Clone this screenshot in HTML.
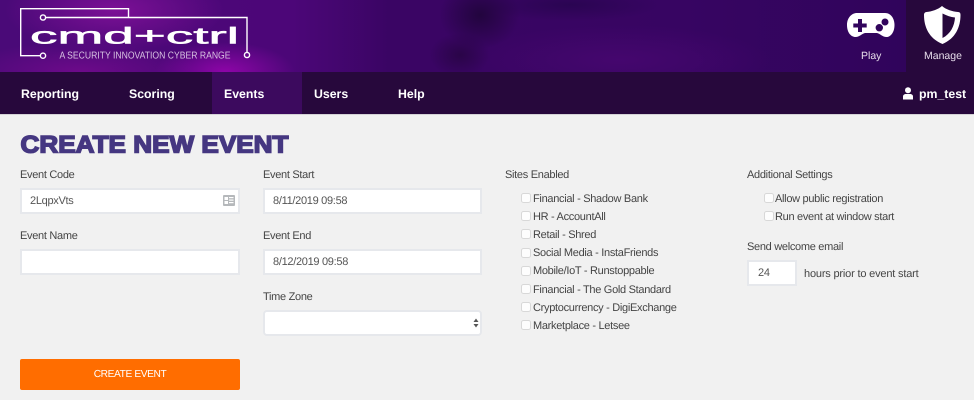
<!DOCTYPE html>
<html><head><meta charset="utf-8"><style>
*{box-sizing:border-box}
html,body{margin:0;padding:0}
body{width:974px;height:400px;overflow:hidden;background:#f1f1f1;position:relative;font-family:"Liberation Sans",sans-serif;color:#444;text-rendering:geometricPrecision}
.a{position:absolute;white-space:nowrap;line-height:14px}
.l{font-size:11px;letter-spacing:-.3px;color:#444}
.i{position:absolute;background:#fff;border:2px solid #e6e8ec;height:26px;font-size:11px;letter-spacing:-.3px;line-height:22px;padding-left:8px;color:#555}
.c{position:absolute;width:10px;height:10px;background:#fdfdfd;border:1px solid #d8d8d8;border-radius:2.5px}
.n{position:absolute;top:87px;font-size:12.3px;font-weight:bold;color:#fff;line-height:15px;white-space:nowrap}
#hd{position:absolute;left:0;top:0;width:974px;height:72px;background:
radial-gradient(ellipse 70px 30px at 225px 72px,#8e05a8 0,rgba(142,5,168,0) 100%),
radial-gradient(ellipse 110px 42px at 115px 10px,#7c1096 0,rgba(124,16,150,0) 100%),
radial-gradient(ellipse 120px 30px at 80px 72px,#6d0a8a 0,rgba(109,10,138,0) 100%),
radial-gradient(ellipse 40px 34px at 480px 15px,#22053e 0,rgba(34,5,62,0) 100%),
radial-gradient(ellipse 30px 22px at 460px 55px,#2a0548 0,rgba(42,5,72,0) 100%),
radial-gradient(ellipse 90px 16px at 570px 5px,#2a0552 0,rgba(42,5,82,0) 100%),
radial-gradient(ellipse 150px 35px at 620px 60px,#45066e 0,rgba(69,6,110,0) 100%),
linear-gradient(90deg,#4a0a78 0,#4c0678 30%,#3a0564 40%,#370562 70%,#2e0459 100%)}
</style></head><body>
<div id="hd"></div>
<div style="position:absolute;left:906px;top:0;width:68px;height:72px;background:#27083c"></div>
<div style="position:absolute;left:0;top:72px;width:974px;height:42px;background:#27083c"></div>
<div style="position:absolute;left:212px;top:72px;width:90px;height:42px;background:#3c0a5e"></div>
<div style="position:absolute;left:0;top:114px;width:974px;height:1px;background:#d4d2d6"></div>

<svg style="position:absolute;left:0;top:0" width="974" height="72" viewBox="0 0 974 72">
<g fill="none" stroke="#fff" stroke-width="1.400">
<path d="M40 55.700H20.700V8.700H128.500V17.500"/>
<path d="M46 17.500H247V52"/>
<circle cx="43" cy="17.500" r="2.600"/>
<circle cx="43" cy="55.700" r="2.600"/>
<circle cx="247" cy="55" r="2.600"/>
</g>
<text x="30" y="43.500" font-family="'Liberation Sans',sans-serif" font-size="23" fill="#fff" stroke="#fff" stroke-width=".5" textLength="209" lengthAdjust="spacingAndGlyphs">cmd+ctrl</text>
<text x="59.500" y="58.500" font-family="'Liberation Sans',sans-serif" font-size="10" fill="#d8c3e2" textLength="171" lengthAdjust="spacingAndGlyphs">A SECURITY INNOVATION CYBER RANGE</text>
<path fill="#fff" fill-rule="evenodd" d="M857 13H885C890.500 13 894.500 18 894.500 25C894.500 32.500 890.500 37 886.500 37C882.500 37 880 33.500 877 33H865C862 33.500 859.500 37 855.500 37C851 37 847 32.500 847 25C847 18 851.500 13 857 13ZM858 19V23.500H853.300V27.500H858V32H862V27.500H866.700V23.500H862V19ZM888.500 22A3.500 3.500 0 1 0 881.500 22A3.500 3.500 0 1 0 888.500 22ZM883 27.700A3.700 3.700 0 1 0 875.600 27.700A3.700 3.700 0 1 0 883 27.700Z"/>
<path fill="#fff" fill-rule="evenodd" d="M942 6C946 9.500 952 11.500 958 12C960 12.200 960.500 13 960.500 15C960.500 27 955.500 38.500 942.500 44C929 38.500 924 27 924 15C924 13 925 12.200 926.500 12C932 11.500 938 9.500 942 6ZM942.500 13.500V38C950.500 34 954.500 26 955 17.500C950.500 17 946.500 15.500 942.500 13.500Z"/>
</svg>
<div class="a" style="left:861px;top:49px;font-size:10.500px;color:#e6dcea">Play</div>
<div class="a" style="left:924px;top:49px;font-size:10.500px;color:#e6dcea">Manage</div>

<div class="n" style="left:21px">Reporting</div>
<div class="n" style="left:129px">Scoring</div>
<div class="n" style="left:224px">Events</div>
<div class="n" style="left:314px">Users</div>
<div class="n" style="left:398px">Help</div>
<div class="n" style="left:919px">pm_test</div>
<svg style="position:absolute;left:902px;top:87px" width="12" height="13" viewBox="0 0 12 13"><circle cx="6" cy="3.300" r="3" fill="#fff"/><path fill="#fff" d="M1 12.500V9.500C1 7.800 2.500 7 4 7H8C9.500 7 11 7.800 11 9.500V12.500Z"/></svg>

<svg style="position:absolute;left:0;top:125px" width="320" height="36" viewBox="0 0 320 36"><text x="20.500" y="27.700" font-family="'Liberation Sans',sans-serif" font-weight="bold" font-size="24" fill="#453781" stroke="#453781" stroke-width="1.500" textLength="268" lengthAdjust="spacingAndGlyphs">CREATE NEW EVENT</text></svg>

<div class="a l" style="left:20px;top:168px">Event Code</div>
<div class="a l" style="left:20px;top:229px">Event Name</div>
<div class="a l" style="left:263px;top:168px">Event Start</div>
<div class="a l" style="left:263px;top:229px">Event End</div>
<div class="a l" style="left:263px;top:290px">Time Zone</div>
<div class="a l" style="left:505px;top:168px">Sites Enabled</div>
<div class="a l" style="left:747px;top:168px">Additional Settings</div>
<div class="a l" style="left:747px;top:240px">Send welcome email</div>

<div class="i" style="left:20px;top:188px;width:220px">2LqpxVts</div>
<svg style="position:absolute;left:223px;top:195px" width="12" height="11" viewBox="0 0 12 11"><rect width="12" height="11" rx="1" fill="#b5b8bb"/><rect x="1.500" y="2" width="3.500" height="3" fill="#fff"/><rect x="1.500" y="6" width="3.500" height="3" fill="#fff"/><rect x="6" y="2" width="4.500" height="1.200" fill="#fff"/><rect x="6" y="4.500" width="4.500" height="1.200" fill="#fff"/><rect x="6" y="7" width="4.500" height="1.200" fill="#fff"/></svg>
<div class="i" style="left:20px;top:249px;width:220px"></div>
<div class="i" style="left:263px;top:188px;width:219px">8/11/2019 09:58</div>
<div class="i" style="left:263px;top:249px;width:219px">8/12/2019 09:58</div>
<div class="i" style="left:263px;top:310px;width:219px;border-radius:4px"></div>
<svg style="position:absolute;left:473px;top:318px" width="6" height="10" viewBox="0 0 6 10"><path fill="#555" d="M3 0.500L5.500 4H.5ZM3 9.500L.5 6H5.500Z"/></svg>
<div class="i" style="left:747px;top:260px;width:50px;height:26px;padding-left:9px">24</div>
<div class="a l" style="left:804px;top:267px;letter-spacing:-.18px">hours prior to event start</div>

<div class="c" style="left:521px;top:193px"></div><div class="a l" style="left:533px;top:192px">Financial - Shadow Bank</div>
<div class="c" style="left:521px;top:211px"></div><div class="a l" style="left:533px;top:210px">HR - AccountAll</div>
<div class="c" style="left:521px;top:229px"></div><div class="a l" style="left:533px;top:228px">Retail - Shred</div>
<div class="c" style="left:521px;top:248px"></div><div class="a l" style="left:533px;top:246px">Social Media - InstaFriends</div>
<div class="c" style="left:521px;top:266px"></div><div class="a l" style="left:533px;top:264px">Mobile/IoT - Runstoppable</div>
<div class="c" style="left:521px;top:284px"></div><div class="a l" style="left:533px;top:283px">Financial - The Gold Standard</div>
<div class="c" style="left:521px;top:302px"></div><div class="a l" style="left:533px;top:301px">Cryptocurrency - DigiExchange</div>
<div class="c" style="left:521px;top:320px"></div><div class="a l" style="left:533px;top:319px">Marketplace - Letsee</div>

<div class="c" style="left:764px;top:193px"></div><div class="a l" style="left:775px;top:192px">Allow public registration</div>
<div class="c" style="left:764px;top:211px"></div><div class="a l" style="left:775px;top:210px">Run event at window start</div>

<div style="position:absolute;left:20px;top:359px;width:220px;height:31px;background:#ff6d00;border-radius:2px;color:#fff;font-size:10.200px;letter-spacing:-.4px;line-height:31px;text-align:center">CREATE EVENT</div>
</body></html>
